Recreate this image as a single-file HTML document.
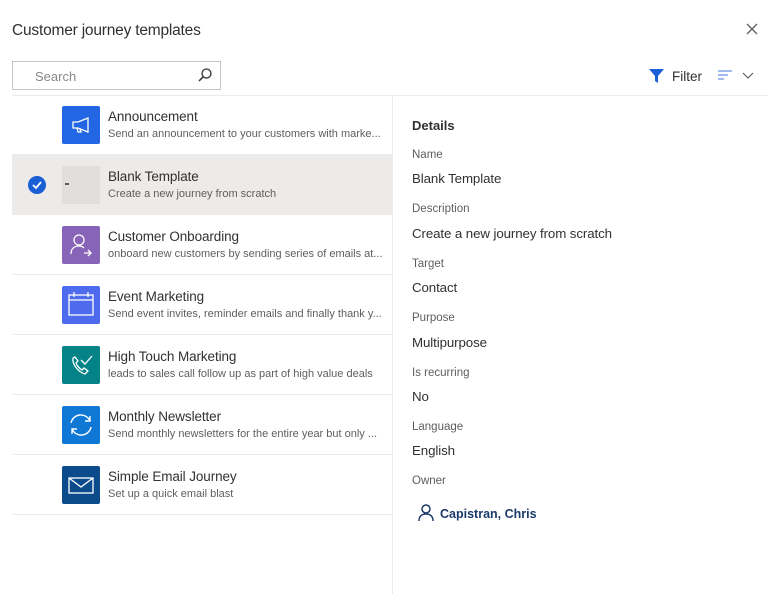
<!DOCTYPE html><html><head><style>
*{margin:0;padding:0;box-sizing:border-box}
body{width:768px;height:594px;background:#fff;font-family:"Liberation Sans",sans-serif;color:#323130;position:relative;overflow:hidden}
.a{position:absolute}
.row{position:absolute;left:12px;width:380px;height:60px;border-bottom:1px solid #edebe9}
.ic{position:absolute;left:50px;top:11px;width:38px;height:38px;border-radius:2px}
.t{position:absolute;left:96px;top:14px;font-size:13.5px;color:#323130;letter-spacing:-0.1px}
.d{position:absolute;left:96px;top:33px;font-size:11px;color:#605e5c;white-space:nowrap;width:276px;overflow:hidden}
.lb{position:absolute;left:412px;font-size:11.5px;color:#605e5c}
.v{position:absolute;left:412px;font-size:13.3px;color:#323130;letter-spacing:-0.1px}
</style></head><body>
<div class="a" style="left:12px;top:22px;font-size:15.5px;letter-spacing:-0.2px">Customer journey templates</div>
<svg class="a" style="left:746px;top:23px" width="12" height="12"><path d="M1 1L11 11M11 1L1 11" stroke="#605e5c" stroke-width="1.3"/></svg>
<div class="a" style="left:12px;top:61px;width:209px;height:29px;border:1px solid #c8c6c4"></div>
<div class="a" style="left:35px;top:69px;font-size:13px;color:#8a8886">Search</div>
<svg class="a" style="left:197px;top:67px" width="16" height="16"><circle cx="9.5" cy="6.5" r="4.5" stroke="#323130" stroke-width="1.3" fill="none"/><path d="M6.3 9.7L2 14" stroke="#323130" stroke-width="1.5"/></svg>
<svg class="a" style="left:649px;top:69px" width="15" height="14"><path d="M0 0H15L9 7V14L6 12V7Z" fill="#1a5fd6"/></svg>
<div class="a" style="left:672px;top:69px;font-size:13.5px">Filter</div>
<svg class="a" style="left:718px;top:70px" width="14" height="11"><path d="M0 1H14M0 5H10M0 9H6" stroke="#6b93e6" stroke-width="1.3"/></svg>
<svg class="a" style="left:742px;top:72px" width="12" height="7"><path d="M1 1L6 6L11 1" stroke="#605e5c" fill="none" stroke-width="1.2"/></svg>
<div class="a" style="left:12px;top:95px;width:756px;border-top:1px solid #edebe9"></div>
<div class="a" style="left:392px;top:95px;height:499px;border-left:1px solid #edebe9"></div>

<div class="row" style="top:95px"><div class="ic" style="background:#2266e3"><svg width="38" height="38"><path d="M11 16H16L26 12V26L16 22H11Z M15 22L16 26H19L18 23" stroke="#fff" fill="none" stroke-width="1.3"/></svg></div><div class="t">Announcement</div><div class="d">Send an announcement to your customers with marke...</div></div>
<div class="row" style="top:155px;background:#edebe9"><svg class="a" style="left:16px;top:21px" width="18" height="18"><circle cx="9" cy="9" r="9" fill="#1a5fd6"/><path d="M5 9L8 12L13 6" stroke="#fff" stroke-width="1.8" fill="none"/></svg><div class="ic" style="background:#e1dfdd"><div class="a" style="left:3px;top:17px;width:4px;height:2px;background:#605e5c"></div></div><div class="t">Blank Template</div><div class="d">Create a new journey from scratch</div></div>
<div class="row" style="top:215px"><div class="ic" style="background:#8764b8"><svg width="38" height="38"><circle cx="17" cy="14" r="5" stroke="#fff" fill="none" stroke-width="1.3"/><path d="M9 28C9 22 13 20 17 20C19 20 21 21 22 22M22 27H29M26 24L29 27L26 30" stroke="#fff" fill="none" stroke-width="1.3"/></svg></div><div class="t">Customer Onboarding</div><div class="d">onboard new customers by sending series of emails at...</div></div>
<div class="row" style="top:275px"><div class="ic" style="background:#4f6bed"><svg width="38" height="38"><rect x="7" y="9" width="24" height="20" stroke="#fff" fill="none" stroke-width="1.3"/><path d="M7 14H31M12 6V11M26 6V11" stroke="#fff" stroke-width="1.3"/></svg></div><div class="t">Event Marketing</div><div class="d">Send event invites, reminder emails and finally thank y...</div></div>
<div class="row" style="top:335px"><div class="ic" style="background:#038387"><svg width="38" height="38"><path d="M11 12C10 18 16 26 23 28L26 25L22 22L20 24C17 22 15 20 14 17L16 15L13 11Z M19 14L23 18L30 10" stroke="#fff" fill="none" stroke-width="1.3"/></svg></div><div class="t">High Touch Marketing</div><div class="d">leads to sales call follow up as part of high value deals</div></div>
<div class="row" style="top:395px"><div class="ic" style="background:#0f78d4"><svg width="38" height="38"><path d="M9 17A10 10 0 0 1 28 15M29 21A10 10 0 0 1 10 23M28 10V15H23M10 28V23H15" stroke="#fff" fill="none" stroke-width="1.4"/></svg></div><div class="t">Monthly Newsletter</div><div class="d">Send monthly newsletters for the entire year but only ...</div></div>
<div class="row" style="top:455px"><div class="ic" style="background:#0b4a8b"><svg width="38" height="38"><rect x="7" y="12" width="24" height="15" stroke="#fff" fill="none" stroke-width="1.3"/><path d="M7 12L19 21L31 12" stroke="#fff" fill="none" stroke-width="1.3"/></svg></div><div class="t">Simple Email Journey</div><div class="d">Set up a quick email blast</div></div>

<div class="a" style="left:412px;top:118px;font-size:13px;font-weight:bold">Details</div>
<div class="lb" style="top:149px">Name</div><div class="v" style="top:171px">Blank Template</div>
<div class="lb" style="top:203px">Description</div><div class="v" style="top:226px">Create a new journey from scratch</div>
<div class="lb" style="top:258px">Target</div><div class="v" style="top:280px">Contact</div>
<div class="lb" style="top:312px">Purpose</div><div class="v" style="top:335px">Multipurpose</div>
<div class="lb" style="top:367px">Is recurring</div><div class="v" style="top:389px">No</div>
<div class="lb" style="top:421px">Language</div><div class="v" style="top:443px">English</div>
<div class="lb" style="top:475px">Owner</div>
<svg class="a" style="left:418px;top:504px" width="16" height="17"><circle cx="8" cy="5" r="4" stroke="#1b3a6b" fill="none" stroke-width="1.5"/><path d="M1 17C1 12 4 10 8 10C12 10 15 12 15 17" stroke="#1b3a6b" fill="none" stroke-width="1.5"/></svg>
<div class="a" style="left:440px;top:507px;font-size:12.5px;font-weight:bold;color:#1b3a6b">Capistran, Chris</div>
</body></html>
